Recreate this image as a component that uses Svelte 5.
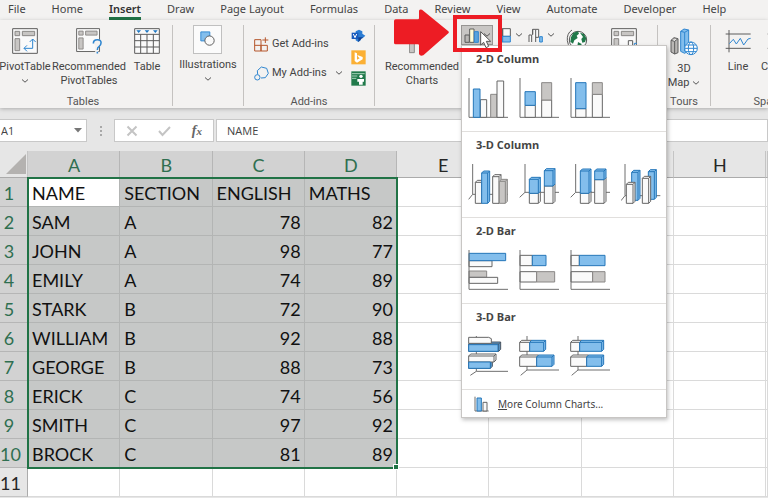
<script lang="ts">
    type Part = [tone: string, d: string];

    const tabs = ['File', 'Home', 'Insert', 'Draw', 'Page Layout', 'Formulas', 'Data', 'Review', 'View', 'Automate', 'Developer', 'Help'];
    const columns = ['A', 'B', 'C', 'D', 'E', 'F', 'G', 'H'];
    const rows = [
        ['NAME', 'SECTION', 'ENGLISH', 'MATHS'],
        ['SAM', 'A', 78, 82],
        ['JOHN', 'A', 98, 77],
        ['EMILY', 'A', 74, 89],
        ['STARK', 'B', 72, 90],
        ['WILLIAM', 'B', 92, 88],
        ['GEORGE', 'B', 88, 73],
        ['ERICK', 'C', 74, 56],
        ['SMITH', 'C', 97, 92],
        ['BROCK', 'C', 81, 89],
        [],
    ];

    let activeTab = $state('Insert');
    let cellName = $state('A1');
    let formula = $state('NAME');

    // flat rectangle and extruded box, given by their front edges
    function rect(x1: number, y1: number, x2: number, y2: number) {
        return `M${x1} ${y1}H${x2}V${y2}H${x1}Z`;
    }
    function box(x1: number, y1: number, x2: number, y2: number, d = 6) {
        return `M${x1} ${y1}L${x1 + d} ${y1 - d}H${x2 + d}V${y2 - d}L${x2} ${y2}H${x1}ZH${x2}V${y2}M${x2} ${y1}l${d} ${-d}`;
    }

    const flatAxis: Part = ['axis', 'M3 0V118H120'];

    const sections: { title: string; charts: { name: string; parts: Part[] }[] }[] = [
        {
            title: '2-D Column',
            charts: [
                { name: 'Clustered Column', parts: [flatAxis, ['white', rect(37, 65, 56, 118)], ['blue', rect(16, 33, 36, 118)], ['grey', rect(68, 49, 87, 118)], ['white', rect(87, 9, 107, 118)]] },
                { name: 'Stacked Column', parts: [flatAxis, ['white', rect(18, 82, 49, 118)], ['blue', rect(18, 41, 49, 82)], ['white', rect(68, 66, 98, 118)], ['grey', rect(68, 14, 98, 66)]] },
                { name: '100% Stacked Column', parts: [flatAxis, ['white', rect(17, 92, 48, 118)], ['blue', rect(17, 14, 48, 92)], ['white', rect(67, 49, 97, 118)], ['grey', rect(67, 14, 97, 49)]] },
            ],
        },
        {
            title: '3-D Column',
            charts: [
                { name: '3-D Clustered Column', parts: [['axis', 'M14 0V91L2 106M14 91H120'], ['white', box(22, 55, 41, 118)], ['blue', box(41, 27, 59, 118)], ['white', box(74, 38, 93, 118)], ['grey', box(94, 52, 112, 118)]] },
                { name: '3-D Stacked Column', parts: [['axis', 'M18 0V85L2 100M18 85H120'], ['white', box(31, 88, 58, 118)], ['blue', box(31, 46, 58, 88)], ['white', box(76, 66, 102, 118)], ['blue', box(76, 20, 102, 66)]] },
                { name: '3-D 100% Stacked Column', parts: [['axis', 'M17 0V85L2 100M17 85H120'], ['white', box(31, 88, 57, 118)], ['blue', box(31, 21, 57, 88)], ['white', box(74, 47, 102, 118)], ['blue', box(74, 21, 102, 47)]] },
                { name: '3-D Column', parts: [['axis', 'M12 0V95L0 110M12 95H118'], ['blue', box(32, 25, 51, 109)], ['white', box(16, 61, 36, 118)], ['blue', box(82, 23, 100, 106)], ['white', box(64, 43, 83, 118)]] },
            ],
        },
        {
            title: '2-D Bar',
            charts: [
                { name: 'Clustered Bar', parts: [['white', rect(3, 32, 72, 50)], ['blue', rect(3, 10, 113, 32)], ['grey', rect(3, 63, 56, 82)], ['white', rect(3, 82, 89, 100)], flatAxis] },
                { name: 'Stacked Bar', parts: [['white', rect(3, 16, 40, 47)], ['blue', rect(40, 16, 81, 47)], ['white', rect(3, 65, 53, 96)], ['grey', rect(53, 65, 107, 96)], flatAxis] },
                { name: '100% Stacked Bar', parts: [['white', rect(3, 16, 28, 47)], ['blue', rect(28, 16, 105, 47)], ['white', rect(3, 65, 68, 96)], ['grey', rect(68, 65, 105, 96)], flatAxis] },
            ],
        },
        {
            title: '3-D Bar',
            charts: [
                { name: '3-D Clustered Bar', parts: [['axis', 'M25 0V106L7 118M25 106H120'], ['shade', box(2, 24, 92, 46)], ['white', 'M2 4H62L70 8V22H2Z'], ['blue', rect(2, 26, 90, 46)], ['shade', box(2, 78, 67, 97)], ['white', box(2, 60, 78, 78)], ['blue', rect(2, 78, 67, 97)]] },
                { name: '3-D Stacked Bar', parts: [['axis', 'M24 0V102L5 118M24 102H120'], ['white', box(2, 19, 32, 46)], ['blue', box(32, 19, 74, 46)], ['white', box(2, 63, 53, 91)], ['blue', box(53, 63, 99, 91)]] },
                { name: '3-D 100% Stacked Bar', parts: [['axis', 'M24 0V102L5 118M24 102H120'], ['white', box(2, 19, 29, 46)], ['blue', box(29, 19, 95, 46)], ['white', box(2, 63, 50, 91)], ['blue', box(50, 63, 95, 91)]] },
            ],
        },
    ];
</script>

{#snippet chevron()}
    <svg class="chevron" width="8" height="6" viewBox="0 0 8 6" aria-hidden="true"><path d="M1 1.500L4 4.200L7 1.500" /></svg>
{/snippet}

{#snippet pivotFrame()}
    <path class="ink paper" d="M2 2H76V76H2Z" />
    <path class="tile" d="M9 10H23V23H9ZM31 10H68V23H31ZM9 32H23V68H9Z" />
{/snippet}

<div class="excel">
    <nav class="tabs" aria-label="Ribbon tabs">
        {#each tabs as tab}
            <button type="button" class="tab" class:active={tab === activeTab} onclick={() => (activeTab = tab)}>{tab}</button>
        {/each}
    </nav>

    <div class="ribbon">
        <section class="group tables">
            <div class="tools">
                <button type="button" class="tool pivot">
                    <svg width="26" height="26" viewBox="0 0 78 78" aria-hidden="true">
                        {@render pivotFrame()}
                        <path class="accent" d="M36 61H62V33M45 52L36 61L45 70M53 42L62 33L71 42" />
                    </svg>
                    <span>PivotTable</span>
                    {@render chevron()}
                </button>
                <button type="button" class="tool wide">
                    <svg width="28" height="28" viewBox="0 0 84 84" aria-hidden="true">
                        {@render pivotFrame()}
                        <path class="gap" d="M55 50Q56 36 68 36Q84 36 82 50L72 64V84H62V56Z" />
                        <path class="accent thick" d="M56 50Q56 38 69 38Q81 38 81 48Q81 56 74 60Q69 63 69 71M69 77V82" />
                    </svg>
                    <span>Recommended<br />PivotTables</span>
                </button>
                <button type="button" class="tool slim">
                    <svg width="26" height="26" viewBox="0 0 78 78" aria-hidden="true">
                        <path class="ink paper" d="M2 2H76V76H2Z" />
                        <path class="ink" d="M2 19H76M2 38H76M2 57H76M20 19V76M39 19V76M58 19V76" />
                        <path class="solid" d="M7 7H21L14 15ZM32 7H46L39 15ZM57 7H71L64 15Z" />
                    </svg>
                    <span>Table</span>
                </button>
            </div>
            <h2>Tables</h2>
        </section>

        <section class="group illustrations">
            <button type="button" class="tool">
                <svg class="framed" width="29" height="29" viewBox="0 0 87 87" aria-hidden="true">
                    <path class="bluefill" d="M22 19H51V48H22Z" />
                    <circle class="ring" cx="50" cy="47" r="15" />
                </svg>
                <span>Illustrations</span>
                {@render chevron()}
            </button>
        </section>

        <section class="group addins">
            <div class="tools">
                <div class="stack">
                    <button type="button" class="row-tool">
                        <svg width="15" height="15" viewBox="0 0 45 45" aria-hidden="true">
                            <path class="rust" d="M2 8H21V42H2ZM2 25H40V42H21M21 25V42M34 1V18M25 9H43" />
                        </svg>
                        Get Add-ins
                    </button>
                    <button type="button" class="row-tool">
                        <svg width="15" height="15" viewBox="0 0 45 45" aria-hidden="true">
                            <path class="accent" d="M11 25L10 14L22 3L38 7L43 22L34 35L21 36" />
                            <circle class="accent" cx="10" cy="34" r="8" />
                        </svg>
                        My Add-ins
                        <span class="push">{@render chevron()}</span>
                    </button>
                </div>
                <div class="badges">
                    <button type="button" aria-label="Visio Data Visualizer">
                        <svg width="15" height="15" viewBox="0 0 45 45" aria-hidden="true">
                            <path fill="#2b7cd3" d="M14 7L24 2L34 7V14L43 20L35 28H29V34L22 39L14 34Z" />
                            <path fill="#185abd" d="M2 11H22V30H2Z" />
                            <path fill="#103f91" d="M22 25H36L22 39Z" />
                            <path d="M7 15L12 26L17 15" fill="none" stroke="#fff" stroke-width="3" />
                        </svg>
                    </button>
                    <button type="button" aria-label="Bing Maps">
                        <svg width="15" height="15" viewBox="0 0 45 45" aria-hidden="true">
                            <path fill="#fbb034" d="M1 1H44V43H1Z" />
                            <path fill="#fff" d="M11 7L18 10V29L26 25L21 20L19 15L35 21V28L18 38L11 33Z" />
                        </svg>
                    </button>
                    <button type="button" aria-label="People Graph">
                        <svg width="15" height="15" viewBox="0 0 45 45" aria-hidden="true">
                            <path fill="#217a4b" d="M1 1H44V44H1Z" />
                            <path d="M3 8H41M3 15H19M3 22H16" stroke="#a7d3b8" />
                            <circle cx="30" cy="16" r="5" fill="#fff" />
                            <path fill="#fff" d="M19 24H39V32H35V41H24V32H19Z" />
                        </svg>
                    </button>
                </div>
            </div>
            <h2>Add-ins</h2>
        </section>

        <section class="group charts">
            <button type="button" class="tool recommended">
                <svg width="26" height="26" viewBox="0 0 78 78" aria-hidden="true">
                    <path class="tile" d="M1 42H16V74H1Z" />
                </svg>
                <span>Recommended<br />Charts</span>
            </button>
            <div class="chart-buttons">
                <div class="dropdown">
                    <button type="button" class="small open" aria-label="Insert Column or Bar Chart" aria-expanded="true">
                        <svg width="16" height="15" viewBox="0 0 48 45" aria-hidden="true">
                            <path class="ink tilefill" d="M3 21H16V43H3Z" />
                            <path class="ink cream" d="M17 3H30V43H17Z" />
                            <path class="accent bluedark" d="M31 11H43V43H31Z" />
                        </svg>
                        {@render chevron()}
                    </button>

                    <div class="menu">
                        {#each sections as section}
                            <section class="gallery">
                                <h3>{section.title}</h3>
                                <div class="choices">
                                    {#each section.charts as chart}
                                        <button type="button" aria-label={chart.name}>
                                            <svg width="41" height="41" viewBox="0 0 123 123" aria-hidden="true">
                                                {#each chart.parts as [tone, d]}
                                                    <path class={tone} {d} />
                                                {/each}
                                            </svg>
                                        </button>
                                    {/each}
                                </div>
                            </section>
                        {/each}
                        <button type="button" class="more">
                            <svg width="15" height="16" viewBox="0 0 45 48" aria-hidden="true">
                                <path class="axis" d="M3 2V45H44" />
                                <path class="blue" d="M9 6H22V45H9Z" />
                                <path class="white" d="M27 19H39V45H27Z" />
                            </svg>
                            <span><u>M</u>ore Column Charts...</span>
                        </button>
                    </div>

                    <svg class="pointer-arrow" width="55" height="47" viewBox="0 0 165 141" aria-hidden="true">
                        <path d="M5 31H72Q75 31 75 27V5Q77 0 84 2L163 67Q166 70 163 73L88 139Q78 143 75 135V109Q75 106 72 106H5Q0 106 0 101V36Q0 31 5 31Z" />
                    </svg>
                    <div class="highlight"></div>
                    <svg class="cursor" width="12" height="18" viewBox="0 0 36 54" aria-hidden="true">
                        <path d="M2 2V42L11 34L18 50L26 46L19 31H32Z" />
                    </svg>
                </div>
                <button type="button" class="small" aria-label="Insert Hierarchy Chart">
                    <svg width="14" height="17" viewBox="0 0 42 51" aria-hidden="true">
                        <path class="ink paper" d="M2 5H14V45H2ZM14 5H37V28H14Z" />
                        <path class="bluefill" d="M14 28H37V45H14Z" />
                    </svg>
                    {@render chevron()}
                </button>
                <button type="button" class="small" aria-label="Insert Waterfall Chart">
                    <svg width="16" height="17" viewBox="0 0 48 51" aria-hidden="true">
                        <path class="ink paper" d="M3 24H11V45M3 45V24M14 21V7H23V45M14 7V24M23 7H32V31H23" />
                        <path class="bluefill" d="M35 29H43V45H35Z" />
                    </svg>
                    {@render chevron()}
                </button>
                <button type="button" class="plain" aria-label="Maps">
                    <svg width="24" height="24" viewBox="0 0 72 72" aria-hidden="true">
                        <circle class="globe" cx="36" cy="36" r="26" />
                        <path fill="#21794a" d="M15 28L22 14L36 10L39 17L32 23L35 30L25 37L21 47L13 41ZM42 14L54 18L61 31L57 42L49 44L46 33L51 27ZM36 42L47 48L42 61H33Z" />
                        <path class="ink" d="M18 6Q2 16 4 38Q5 50 14 60" />
                    </svg>
                </button>
                <button type="button" class="plain" aria-label="PivotChart">
                    <svg width="26" height="26" viewBox="0 0 78 78" aria-hidden="true">
                        {@render pivotFrame()}
                        <path class="ink paper" d="M52 62V38H65V62" />
                        <path class="accent" d="M70 62V46H78" />
                    </svg>
                </button>
            </div>
        </section>

        <section class="group tours">
            <button type="button" class="tool">
                <svg width="28" height="28" viewBox="0 0 84 84" aria-hidden="true">
                    <path class="ink tilefill" d="M3 37L12 29L24 32V74L14 78L3 72Z" />
                    <path class="ink paper" d="M3 37L14 40L24 32M14 40V78" />
                    <path class="bluefill" d="M32 10L42 3L56 6V68L44 76L32 70Z" />
                    <path class="accent" d="M32 10L44 13L56 6M44 13V70" />
                    <circle cx="63" cy="61" r="19" fill="#fff" stroke="#2f86d0" />
                    <ellipse class="accent" cx="63" cy="61" rx="8" ry="19" />
                    <path class="accent" d="M44 61H82M48 51H78M48 71H78" />
                </svg>
                <span>3D<br />Map {@render chevron()}</span>
            </button>
            <h2>Tours</h2>
        </section>

        <section class="group sparklines">
            <div class="tools">
                <button type="button" class="tool">
                    <svg width="26" height="26" viewBox="0 0 78 78" aria-hidden="true">
                        <path class="ink" d="M2 18H77M2 61H77M12 6V73" />
                        <path class="accent" d="M13 47L25 34L34 48L46 31L56 51L69 33L77 31" />
                    </svg>
                    <span>Line</span>
                </button>
                <button type="button" class="tool">
                    <svg width="26" height="26" viewBox="0 0 78 78" aria-hidden="true">
                        <path class="ink" d="M2 18H77M2 61H77M12 6V73" />
                        <path class="bluefill" d="M20 40H30V61H20ZM40 30H50V61H40Z" />
                    </svg>
                    <span>Column</span>
                </button>
            </div>
            <h2>Sparklines</h2>
        </section>
    </div>

    <div class="formula-bar">
        <div class="name-box">
            <input aria-label="Name box" bind:value={cellName} />
            <button type="button" aria-label="Show names">
                <svg width="8" height="5" viewBox="0 0 8 5" aria-hidden="true"><path class="flat" d="M0 0H8L4 4.500Z" /></svg>
            </button>
        </div>
        <span class="dots" aria-hidden="true"><i></i><i></i><i></i></span>
        <div class="entry">
            <button type="button" aria-label="Cancel">
                <svg width="12" height="12" viewBox="0 0 12 12" aria-hidden="true"><path class="mark" d="M1.500 1.500L10.500 10.500M10.500 1.500L1.500 10.500" /></svg>
            </button>
            <button type="button" aria-label="Enter">
                <svg width="13" height="12" viewBox="0 0 13 12" aria-hidden="true"><path class="mark" d="M1 6L4.500 10L12 2" /></svg>
            </button>
            <button type="button" class="fx" aria-label="Insert Function">f<small>x</small></button>
        </div>
        <input class="formula" aria-label="Formula" bind:value={formula} />
    </div>

    <div class="sheet">
        <table>
            <colgroup>
                <col class="heading-col" />
                {#each columns as _}<col />{/each}
                <col class="cut-col" />
            </colgroup>
            <thead>
                <tr>
                    <th class="corner"><svg width="20" height="20" viewBox="0 0 20 20" aria-hidden="true"><path d="M20 0V20H0Z" fill="#b4b2b0" /></svg></th>
                    {#each columns as column, c}
                        <th scope="col" class:picked={c < 4}>{column}</th>
                    {/each}
                    <th></th>
                </tr>
            </thead>
            <tbody>
                {#each rows as row, r}
                    <tr>
                        <th scope="row" class:picked={r < 10}>{r + 1}</th>
                        {#each columns as _, c}
                            <td
                                class:picked={r < 10 && c < 4}
                                class:current={r === 0 && c === 0}
                                class:number={typeof row[c] === 'number'}
                            >{row[c] ?? ''}</td>
                        {/each}
                        <td></td>
                    </tr>
                {/each}
            </tbody>
        </table>
        <div class="selection"><span class="handle"></span></div>
    </div>
</div>

<style>
    :global(body) {
        overflow: hidden;
        background: #e6e6e6;
    }

    .excel {
        min-height: 100vh;
        overflow: hidden;
        background: #e6e6e6;
        color: #444;
        font: 11px/14px "Open Sans", "Noto Sans", sans-serif;
    }

    button,
    input {
        box-sizing: border-box;
        margin: 0;
        padding: 0;
        border: 0;
        background: none;
        color: inherit;
        font: inherit;
    }

    svg {
        display: block;
        flex: none;
    }

    h2,
    h3 {
        margin: 0;
        font-size: 11px;
        line-height: 14px;
    }

    /* --- tabs --- */
    .tabs {
        display: flex;
        gap: 26px;
        height: 20px;
        padding-left: 8px;
        background: #f3f2f1;
        font-family: "Noto Sans", sans-serif;
    }

    .tab {
        padding: 2px 0 1px;
        border-bottom: 3px solid transparent;
        line-height: 14px;
        white-space: nowrap;
    }

    .tab.active {
        border-color: #217346;
        color: #333;
        font-weight: 600;
    }

    /* --- ribbon --- */
    .ribbon {
        display: flex;
        position: relative;
        z-index: 1;
        height: 81px;
        padding: 5px 0 2px;
        background: #f3f2f1;
        box-shadow: 0 1px 4px rgba(0, 0, 0, 0.25);
        font-family: Roboto, sans-serif;
    }

    .group {
        display: flex;
        flex: none;
        flex-direction: column;
        justify-content: space-between;
        box-sizing: border-box;
        border-right: 1px solid #c4c2c0;
    }

    .group h2 {
        color: #555;
        font-weight: 400;
        line-height: 9px;
        text-align: center;
    }

    .tools {
        display: flex;
    }

    .tool {
        display: flex;
        flex-direction: column;
        align-items: center;
        padding-top: 3px;
        white-space: nowrap;
    }

    .tool > span {
        margin-top: 6px;
        text-align: center;
    }

    .tool > .chevron {
        margin-top: 4px;
    }

    .pivot {
        width: 50px;
    }

    .wide {
        width: 78px;
    }

    .wide > svg {
        height: 26px;
        overflow: visible;
    }

    .slim {
        width: 38px;
    }

    .tables {
        padding-right: 6px;
    }

    .illustrations {
        width: 71px;
        align-items: center;
    }

    .illustrations .tool {
        padding-top: 0;
    }

    .illustrations .tool > span {
        margin-top: 4px;
    }

    .framed {
        box-sizing: border-box;
        border: 1px solid #c0c0c0;
        background: #fbfbfb;
    }

    .addins {
        width: 131px;
        padding-left: 10px;
    }

    .addins h2 {
        padding-right: 10px;
    }

    .stack {
        display: flex;
        flex: 1;
        flex-direction: column;
        gap: 15px;
        padding-top: 12px;
    }

    .row-tool {
        display: flex;
        align-items: center;
        gap: 3px;
        height: 14px;
        white-space: nowrap;
    }

    .push {
        margin-left: 5px;
    }

    .badges {
        display: flex;
        flex-direction: column;
        gap: 6px;
        padding: 4px 8px 0 0;
    }

    .charts {
        width: 283px;
        flex-direction: row;
        justify-content: flex-start;
        align-items: flex-start;
    }

    .recommended {
        width: 86px;
        padding-left: 8px;
    }

    .chart-buttons {
        display: flex;
        align-items: flex-start;
    }

    .dropdown {
        position: relative;
        margin-right: 3px;
    }

    .small {
        display: flex;
        align-items: center;
        gap: 3px;
        width: 30px;
        height: 20px;
        padding-left: 2px;
    }

    .small.open {
        width: 32px;
        border: 1px solid #979593;
        background: #c8c6c4;
    }

    .plain {
        margin-left: 10px;
        padding-top: 3px;
    }

    .plain + .plain {
        margin-left: 21px;
    }

    .tours {
        width: 53px;
    }

    .tours span .chevron {
        display: inline-block;
        vertical-align: middle;
    }

    .sparklines {
        width: 136px;
        border-right: 0;
    }

    .sparklines .tools {
        gap: 10px;
        padding-left: 14px;
    }

    /* --- icon strokes --- */
    path,
    circle,
    ellipse {
        stroke-width: 3;
    }

    .chevron {
        fill: none;
        stroke: #555;
    }

    .chevron path {
        stroke-width: 1;
    }

    .ink {
        fill: none;
        stroke: #5c5c5c;
    }

    .paper {
        fill: #fafafa;
    }

    .cream {
        fill: #fffdd8;
    }

    .tile {
        fill: #c8c6c4;
        stroke: #8a8886;
    }

    .tilefill {
        fill: #b9b7b5;
    }

    .gap {
        fill: #f3f2f1;
    }

    .accent {
        fill: none;
        stroke: #2f86d0;
    }

    .thick {
        stroke-width: 5;
    }

    .solid {
        fill: #1e77c2;
    }

    .bluefill {
        fill: #83beec;
        stroke: #2f86d0;
    }

    .bluedark {
        fill: #5aa3dc;
    }

    .ring {
        fill: #fafafa;
        stroke: #555;
    }

    .globe {
        fill: #fff;
        stroke: #555;
    }

    .rust {
        fill: none;
        stroke: #b5572d;
    }

    .axis {
        fill: none;
        stroke: #6f6f6f;
    }

    .blue {
        fill: #83beec;
        stroke: #2576b9;
    }

    .shade {
        fill: #5a9bd0;
        stroke: #4a5560;
    }

    .white {
        fill: #fafafa;
        stroke: #666;
    }

    .grey {
        fill: #c8c6c4;
        stroke: #8a8886;
    }

    .flat {
        fill: #777;
    }

    /* --- chart menu --- */
    .menu {
        position: absolute;
        top: 20px;
        left: 0;
        box-sizing: border-box;
        width: 206px;
        border: 1px solid #c8c6c4;
        background: #fff;
        box-shadow: 1px 2px 4px rgba(0, 0, 0, 0.25);
    }

    .gallery {
        box-sizing: border-box;
        height: 86px;
        padding: 6px 6px 0;
        border-bottom: 1px solid #e1dfdd;
    }

    .gallery h3 {
        padding-left: 8px;
        font-family: "Open Sans", "Noto Sans", sans-serif;
        font-weight: 700;
    }

    .choices {
        display: flex;
        gap: 10px;
        padding-top: 12px;
    }

    .more {
        display: flex;
        align-items: center;
        gap: 9px;
        width: 100%;
        height: 27px;
        padding-left: 12px;
        font-family: "Noto Sans", sans-serif;
        font-size: 10px;
    }

    .highlight {
        position: absolute;
        top: -10px;
        left: -8px;
        box-sizing: border-box;
        width: 49px;
        height: 37px;
        border: 4px solid #ed1c24;
    }

    .pointer-arrow {
        position: absolute;
        top: -16px;
        left: -67px;
        fill: #ed1c24;
    }

    .cursor {
        position: absolute;
        top: 6px;
        left: 19px;
        fill: #fff;
        stroke: #555;
    }

    /* --- formula bar --- */
    .formula-bar {
        display: flex;
        height: 23px;
        padding: 11px 0 9px;
    }

    .name-box,
    .entry,
    .formula {
        box-sizing: border-box;
        border: 1px solid #c8c8c8;
        background: #fff;
    }

    .name-box {
        display: flex;
        width: 87px;
        border-left: 0;
    }

    .name-box input {
        width: 74px;
        padding-left: 1px;
    }

    .dots {
        display: flex;
        flex-direction: column;
        align-items: center;
        justify-content: center;
        gap: 2px;
        width: 27px;
    }

    .dots i {
        width: 2px;
        height: 2px;
        background: #a8a8a8;
    }

    .entry {
        display: flex;
        align-items: center;
        justify-content: space-between;
        width: 100px;
        margin-right: 2px;
        padding: 0 11px;
    }

    .mark {
        fill: none;
        stroke: #c4c4c4;
        stroke-width: 2;
    }

    .fx {
        color: #666;
        font: italic 700 14px/16px "Liberation Serif", serif;
    }

    .fx small {
        font-size: 11px;
    }

    .formula {
        flex: 1;
        min-width: 0;
        padding-left: 10px;
    }

    /* --- sheet --- */
    .sheet {
        position: relative;
        font: 18px/24px Lato, Carlito, sans-serif;
    }

    table {
        width: 100%;
        border-spacing: 0;
        table-layout: fixed;
        background: #fff;
        color: #111;
    }

    .heading-col {
        width: 28px;
    }

    .cut-col {
        width: 2px;
    }

    th,
    td {
        box-sizing: border-box;
        height: 29px;
        padding: 2px 3px 0 4px;
        border: solid #dadada;
        border-width: 0 1px 1px 0;
        overflow: hidden;
        white-space: nowrap;
    }

    th {
        background: #e6e6e6;
        color: #262626;
        font-weight: 400;
    }

    thead th {
        height: 27px;
        border-right-color: #c4c4c4;
        border-bottom-color: #ababab;
    }

    tbody th {
        padding: 2px 9px 0 0;
        border-color: #c4c4c4;
        border-right-color: #ababab;
    }

    th.picked {
        border-color: #b6b6b6;
        background: #d2d2d2;
        color: #2f6f50;
    }

    th.corner {
        padding: 0 2px 0 6px;
    }

    td.picked {
        border-color: #b3b5b4;
        background: #c6c8c7;
    }

    td.current {
        background: #fff;
    }

    .number {
        text-align: right;
    }

    /* covers four of the eight equal columns, ten rows deep */
    .selection {
        position: absolute;
        top: 26px;
        left: 27px;
        box-sizing: border-box;
        width: calc((100% - 30px) / 2 + 2px);
        height: 292px;
        border: 2px solid #217346;
    }

    .handle {
        position: absolute;
        right: -3px;
        bottom: -3px;
        width: 4px;
        height: 4px;
        border: 1px solid #fff;
        background: #217346;
    }
</style>
